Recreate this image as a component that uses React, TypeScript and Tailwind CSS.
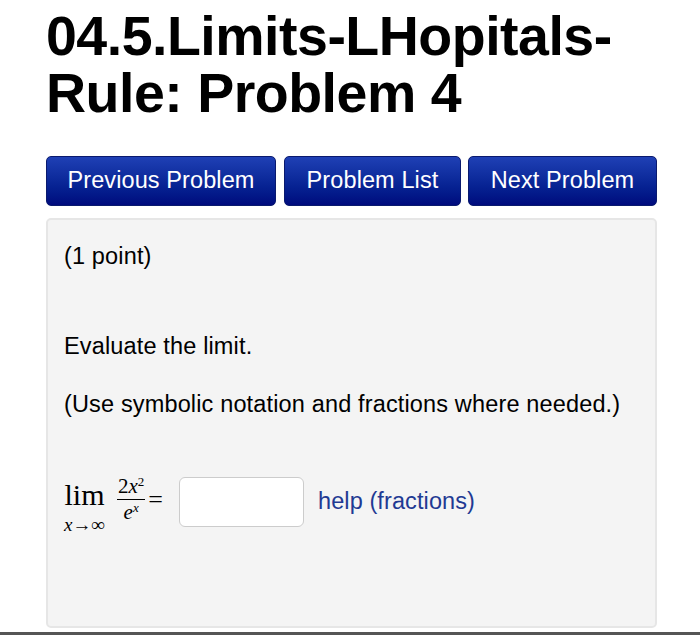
const font = { fontFamily: '"Liberation Sans", Arial, sans-serif' };
const serif = { fontFamily: '"Liberation Serif", "Times New Roman", serif' };

function NavButton({ label, width }: { label: string; width: string }) {
  return (
    <button
      className={`${width} h-[50px] shrink-0 rounded-[5px] border border-[#0a1a6e] bg-gradient-to-b from-[#1f40b5] to-[#000a7d] text-[23.5px] tracking-[0.1px] text-white`}
    >
      {label}
    </button>
  );
}

export default function App() {
  return (
    <div className="relative h-[635px] w-[700px] overflow-hidden bg-white" style={font}>
      <div className="px-[46px] pt-[8px]">
        <h1 className="text-[55.5px] font-bold leading-[57px] tracking-[-0.5px] text-black">
          04.5.Limits-LHopitals-
          <br />
          Rule: Problem 4
        </h1>

        <div className="mt-[34px] flex">
          <NavButton label="Previous Problem" width="w-[230px]" />
          <div className="w-[8px] shrink-0" />
          <NavButton label="Problem List" width="w-[177px]" />
          <div className="w-[7px] shrink-0" />
          <NavButton label="Next Problem" width="w-[189px]" />
        </div>

        <div className="mt-[12px] h-[410px] w-[611px] rounded-[5px] border-2 border-[#e6e6e6] bg-[#f4f4f4] px-[16px] pt-[22px] text-[23.5px] tracking-[0.15px] text-black">
          <p className="leading-[28px]">(1 point)</p>
          <p className="mt-[62px] leading-[28px]">Evaluate the limit.</p>
          <p className="mt-[30px] leading-[28px]">(Use symbolic notation and fractions where needed.)</p>

          <div className="mt-[62px] flex items-center tracking-normal">
            <div className="flex items-center text-black" style={serif}>
              <div className="flex flex-col items-center leading-none">
                <span className="text-[30px]">lim</span>
                <span className="mt-[5px] text-[19px] italic">x→∞</span>
              </div>
              <div className="ml-[12px] -mt-[16px] flex flex-col items-center text-[21px] leading-none">
                <span className="px-[1px]">
                  2<i>x</i>
                  <sup className="text-[13px]">2</sup>
                </span>
                <span className="my-[2px] h-px w-full bg-black" />
                <span>
                  <i>e</i>
                  <sup className="text-[13px] italic">x</sup>
                </span>
              </div>
              <span className="ml-[3px] -mt-[16px] text-[26px]">=</span>
            </div>
            <div className="ml-[16px] -mt-[10px] h-[50px] w-[125px] rounded-[6px] border border-[#cccccc] bg-white" />
            <a className="ml-[14px] -mt-[10px] text-[23.5px] tracking-[0.1px] text-[#1f3a93]">help (fractions)</a>
          </div>
        </div>
      </div>
      <div className="absolute bottom-0 left-0 h-[3px] w-full bg-[#555555]" />
    </div>
  );
}
